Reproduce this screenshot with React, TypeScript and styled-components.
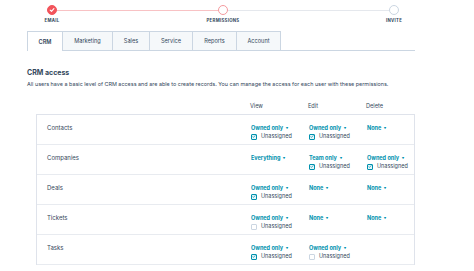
import React from 'react';
import styled, { createGlobalStyle } from 'styled-components';

const GlobalStyle = createGlobalStyle`
  body {
    margin: 0;
    background: #fff;
    font-family: Inter, "Open Sans", sans-serif;
    color: #33475b;
  }
`;

type Access = { label: string; unassigned?: boolean | null };
type Row = { name: string; view: Access; edit: Access; del?: Access };

const rows: Row[] = [
  { name: 'Contacts', view: { label: 'Owned only', unassigned: true }, edit: { label: 'Owned only', unassigned: true }, del: { label: 'None' } },
  { name: 'Companies', view: { label: 'Everything' }, edit: { label: 'Team only', unassigned: true }, del: { label: 'Owned only', unassigned: true } },
  { name: 'Deals', view: { label: 'Owned only', unassigned: true }, edit: { label: 'None' }, del: { label: 'None' } },
  { name: 'Tickets', view: { label: 'Owned only', unassigned: false }, edit: { label: 'None' }, del: { label: 'None' } },
  { name: 'Tasks', view: { label: 'Owned only', unassigned: true }, edit: { label: 'Owned only', unassigned: false } },
];

const tabs = ['CRM', 'Marketing', 'Sales', 'Service', 'Reports', 'Account'];
const tabWidths = [36, 50, 37, 43, 44, 44];

const App: React.FunctionComponent = () => {
  return (
    <>
      <GlobalStyle />
      <Page>
        <Stepper>
          <Step>
            <Dot state="done">
              <svg width="6" height="6" viewBox="0 0 6 6">
                <path d="M1.2 3.1 L2.5 4.3 L4.9 1.7" fill="none" stroke="#fff" strokeWidth="1.1" strokeLinecap="round" strokeLinejoin="round" />
              </svg>
            </Dot>
            <StepLabel>Email</StepLabel>
          </Step>
          <Connector done />
          <Step>
            <Dot state="current" />
            <StepLabel>Permissions</StepLabel>
          </Step>
          <Connector />
          <Step>
            <Dot state="todo" />
            <StepLabel>Invite</StepLabel>
          </Step>
        </Stepper>

        <Tabs>
          {tabs.map((t, i) => (
            <Tab key={t} active={i === 0} w={tabWidths[i]}>
              {t}
            </Tab>
          ))}
        </Tabs>

        <Title>CRM access</Title>
        <Desc>
          All users have a basic level of CRM access and are able to create records. You can manage the access for each user with these permissions.
        </Desc>

        <HeadRow>
          <span />
          <span>View</span>
          <span>Edit</span>
          <span>Delete</span>
        </HeadRow>

        <Table>
          {rows.map((r) => (
            <TableRow key={r.name}>
              <Name>{r.name}</Name>
              <Cell a={r.view} />
              <Cell a={r.edit} />
              {r.del ? <Cell a={r.del} /> : <span />}
            </TableRow>
          ))}
        </Table>
      </Page>
    </>
  );
};

const Cell = ({ a }: { a: Access }) => (
  <CellBox>
    <Drop>
      {a.label}
      <Caret>▾</Caret>
    </Drop>
    {a.unassigned !== undefined && a.unassigned !== null && (
      <Check>
        <Box checked={a.unassigned}>
          {a.unassigned && (
            <svg width="5" height="5" viewBox="0 0 5 5">
              <path d="M0.9 2.6 L2 3.6 L4.1 1.2" fill="none" stroke="#0091ae" strokeWidth="0.8" strokeLinecap="round" strokeLinejoin="round" />
            </svg>
          )}
        </Box>
        Unassigned
      </Check>
    )}
  </CellBox>
);

export default App;

const Page = styled.div`
  width: 474px;
  height: 271px;
  overflow: hidden;
  padding-left: 27px;
  box-sizing: border-box;
`;

const Stepper = styled.div`
  display: flex;
  align-items: flex-start;
  width: 382px;
  margin-left: 5px;
  padding-top: 5px;
  height: 31px;
  box-sizing: border-box;
`;

const Step = styled.div`
  width: 40px;
  display: flex;
  flex-direction: column;
  align-items: center;
`;

const Dot = styled.div<{ state: 'done' | 'current' | 'todo' }>`
  width: 10px;
  height: 10px;
  border-radius: 50%;
  box-sizing: border-box;
  display: flex;
  align-items: center;
  justify-content: center;
  background: ${(p) => (p.state === 'done' ? '#f2545b' : '#fff')};
  border: 1px solid ${(p) => (p.state === 'todo' ? '#cbd6e2' : p.state === 'current' ? '#f59a9e' : '#f2545b')};
`;

const StepLabel = styled.div`
  margin-top: 3px;
  font-size: 4.3px;
  font-weight: 700;
  letter-spacing: 0.3px;
  text-transform: uppercase;
  color: #33475b;
  white-space: nowrap;
`;

const Connector = styled.div<{ done?: boolean }>`
  flex: 1;
  height: 1px;
  margin: 4.5px -15px 0;
  background: ${(p) => (p.done ? '#f8c2c4' : '#e5e8ed')};
`;

const Tabs = styled.div`
  display: flex;
  width: 388px;
  height: 19px;
  border-bottom: 1px solid #cbd6e2;
`;

const Tab = styled.div<{ active?: boolean; w: number }>`
  width: ${(p) => p.w}px;
  box-sizing: border-box;
  display: flex;
  align-items: center;
  justify-content: center;
  font-size: 5.6px;
  font-weight: ${(p) => (p.active ? 600 : 400)};
  color: #33475b;
  background: ${(p) => (p.active ? '#fff' : '#f5f8fa')};
  border: 1px solid #cbd6e2;
  border-left-width: ${(p) => (p.active ? 1 : 0)}px;
  border-bottom: none;
  ${(p) => (p.active ? 'margin-bottom: -1px; height: 20px;' : '')}
`;

const Title = styled.div`
  margin-top: 17px;
  font-size: 7px;
  font-weight: 700;
  line-height: 9px;
  color: #33475b;
`;

const Desc = styled.div`
  margin-top: 3px;
  font-size: 5.45px;
  line-height: 8px;
  white-space: nowrap;
  color: #33475b;
`;

const grid = `
  display: grid;
  grid-template-columns: 204px 58px 58px 1fr;
  padding-left: 10px;
`;

const HeadRow = styled.div`
  ${grid}
  width: 379px;
  margin-left: 9px;
  box-sizing: border-box;
  margin-top: 14px;
  height: 12px;
  font-size: 5.6px;
  line-height: 8px;
  color: #33475b;
`;

const Table = styled.div`
  width: 379px;
  margin-left: 9px;
  border: 1px solid #dfe3eb;
  border-bottom: none;
  box-sizing: border-box;
`;

const TableRow = styled.div`
  ${grid}
  height: 30px;
  box-sizing: border-box;
  border-bottom: 1.5px solid #e8ebf0;
  padding-top: 8px;
`;

const Name = styled.div`
  font-size: 6px;
  line-height: 9px;
  color: #33475b;
`;

const CellBox = styled.div`
  display: flex;
  flex-direction: column;
`;

const Drop = styled.div`
  font-size: 5.5px;
  line-height: 9px;
  font-weight: 700;
  color: #0091ae;
  white-space: nowrap;
`;

const Caret = styled.span`
  font-size: 4px;
  margin-left: 3px;
  vertical-align: 1px;
`;

const Check = styled.div`
  display: flex;
  align-items: center;
  gap: 4px;
  font-size: 5.5px;
  line-height: 7px;
  color: #33475b;
  white-space: nowrap;
`;

const Box = styled.span<{ checked?: boolean }>`
  width: 6px;
  height: 6px;
  box-sizing: border-box;
  border-radius: 1px;
  display: flex;
  align-items: center;
  justify-content: center;
  border: 0.8px solid ${(p) => (p.checked ? '#0091ae' : '#cbd6e2')};
  background: ${(p) => (p.checked ? '#e5f5f8' : '#fff')};
`;
